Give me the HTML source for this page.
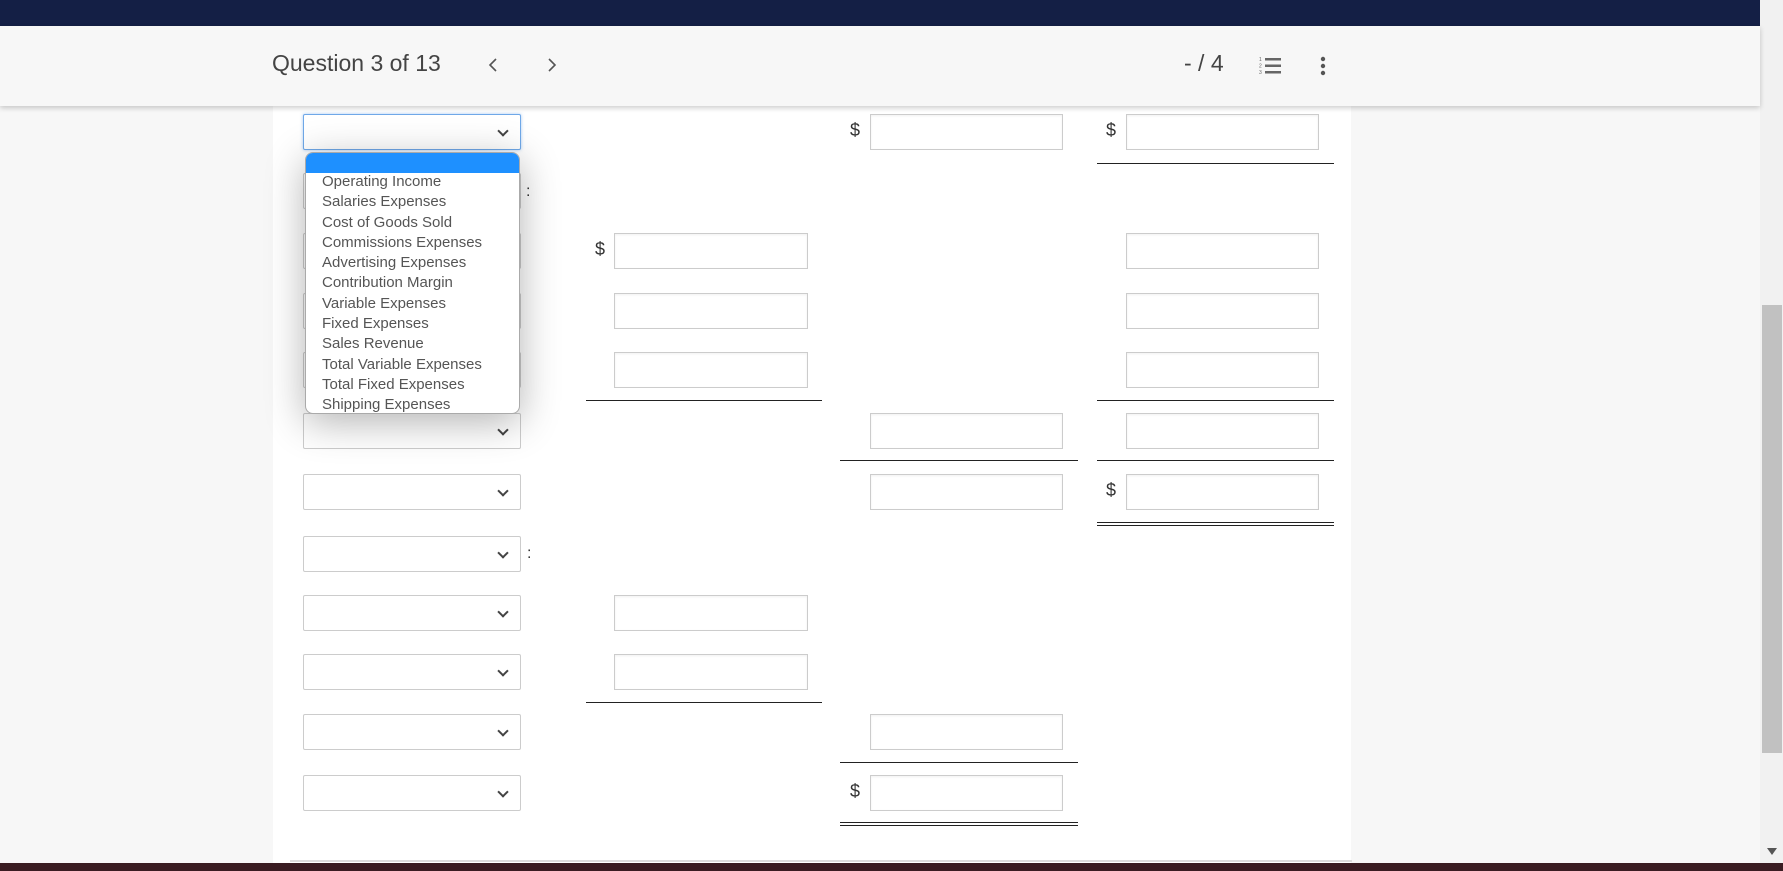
<!DOCTYPE html>
<html><head><meta charset="utf-8"><style>
*{margin:0;padding:0;box-sizing:border-box}
body{width:1783px;height:871px;position:relative;overflow:hidden;background:#f7f7f7;font-family:"Liberation Sans",sans-serif;color:#333}
.a{position:absolute}
.top{left:0;top:0;width:1760px;height:26px;background:#141f45}
.hdr{left:0;top:26px;width:1760px;height:80px;background:#f7f7f7;box-shadow:0 2px 5px rgba(0,0,0,.2);z-index:3}
.panel{left:273px;top:106px;width:1078px;height:760px;background:#fff}
.sel{position:absolute;left:303px;width:218px;height:36px;border:1px solid #ccc;border-radius:2px;background:#fff}
.sel:after{content:"";position:absolute;right:13px;top:12px;width:6px;height:6px;border-right:2px solid #444;border-bottom:2px solid #444;transform:rotate(45deg)}
.in{position:absolute;height:36px;border:1px solid #ccc;background:#fff;box-shadow:inset 0 1px 2px rgba(0,0,0,.06)}
.c2{left:614px;width:194px}.c3{left:870px;width:193px}.c4{left:1126px;width:193px}
.ln{position:absolute;height:0;border-top:1.5px solid #222}
.dbl{position:absolute;height:4px;border-top:1.5px solid #222;border-bottom:1.5px solid #222}
.d{position:absolute;font-size:18px;color:#333}
.colon{position:absolute;font-size:16px}
.dd{left:305px;top:152px;width:215px;height:262px;background:#fff;border:1px solid #aaa;border-radius:8px;overflow:hidden;box-shadow:0 8px 40px rgba(0,0,0,.3);z-index:5}
.dd .hl{height:20px;background:#1e90ff}
.dd div.i{padding-left:16px;font-size:15px;line-height:20.3px;color:#555;white-space:nowrap}
.sb{left:1760px;top:0;width:23px;height:863px;background:#f1f1f1}
.th{left:1762px;top:305px;width:20px;height:448px;background:#c1c1c1}
.bot{left:0;top:863px;width:1783px;height:8px;background:#3a1c22}
</style></head><body>
<div class="a top"></div>
<div class="a hdr">
<div class="a" style="left:272px;top:24px;font-size:23px;color:#444">Question 3 of 13</div>
<svg class="a" style="left:488px;top:31px" width="10" height="16"><path d="M8 2 L2 8 L8 14" fill="none" stroke="#555" stroke-width="1.6"/></svg>
<svg class="a" style="left:547px;top:31px" width="10" height="16"><path d="M2 2 L8 8 L2 14" fill="none" stroke="#555" stroke-width="1.6"/></svg>
<div class="a" style="left:1184px;top:24px;font-size:23px;color:#444">- / 4</div>
<svg class="a" style="left:1259px;top:30px" width="24" height="20" viewBox="0 0 24 20"><g fill="#666"><rect x="6" y="2" width="16" height="2.5"/><rect x="6" y="8.5" width="16" height="2.5"/><rect x="6" y="15" width="16" height="2.5"/><text x="0" y="5" font-size="5" font-family="Liberation Sans">1</text><text x="0" y="11.5" font-size="5" font-family="Liberation Sans">2</text><text x="0" y="18" font-size="5" font-family="Liberation Sans">3</text></g></svg>
<svg class="a" style="left:1320px;top:30px" width="6" height="20"><g fill="#555"><circle cx="3" cy="3" r="2.2"/><circle cx="3" cy="10" r="2.2"/><circle cx="3" cy="17" r="2.2"/></g></svg>
</div>
<div class="a panel"></div>
<div class="a" style="left:290px;top:860px;width:1062px;height:2px;background:#ddd"></div>

<div class="sel" style="top:114px;border-color:#6fa8e8;box-shadow:0 0 3px rgba(80,150,230,.5)"></div>
<div class="sel" style="top:173px"></div><div class="colon" style="left:526px;top:183px">:</div>
<div class="sel" style="top:233px"></div>
<div class="sel" style="top:293px"></div>
<div class="sel" style="top:352px"></div>
<div class="sel" style="top:413px"></div>
<div class="sel" style="top:474px"></div>
<div class="sel" style="top:536px"></div><div class="colon" style="left:527px;top:545px">:</div>
<div class="sel" style="top:595px"></div>
<div class="sel" style="top:654px"></div>
<div class="sel" style="top:714px"></div>
<div class="sel" style="top:775px"></div>

<div class="d" style="left:595px;top:239px">$</div>
<div class="in c2" style="top:233px"></div>
<div class="in c2" style="top:293px"></div>
<div class="in c2" style="top:352px"></div>
<div class="ln" style="left:586px;width:236px;top:400px"></div>
<div class="in c2" style="top:595px"></div>
<div class="in c2" style="top:654px"></div>
<div class="ln" style="left:586px;width:236px;top:702px"></div>

<div class="d" style="left:850px;top:120px">$</div>
<div class="in c3" style="top:114px"></div>
<div class="in c3" style="top:413px"></div>
<div class="ln" style="left:840px;width:238px;top:460px"></div>
<div class="in c3" style="top:474px"></div>
<div class="in c3" style="top:714px"></div>
<div class="ln" style="left:840px;width:238px;top:762px"></div>
<div class="d" style="left:850px;top:781px">$</div>
<div class="in c3" style="top:775px"></div>
<div class="dbl" style="left:840px;width:238px;top:822px"></div>

<div class="d" style="left:1106px;top:120px">$</div>
<div class="in c4" style="top:114px"></div>
<div class="ln" style="left:1097px;width:237px;top:163px"></div>
<div class="in c4" style="top:233px"></div>
<div class="in c4" style="top:293px"></div>
<div class="in c4" style="top:352px"></div>
<div class="ln" style="left:1097px;width:237px;top:400px"></div>
<div class="in c4" style="top:413px"></div>
<div class="ln" style="left:1097px;width:237px;top:460px"></div>
<div class="d" style="left:1106px;top:480px">$</div>
<div class="in c4" style="top:474px"></div>
<div class="dbl" style="left:1097px;width:237px;top:522px"></div>

<div class="a dd"><div class="hl"></div>
<div class="i" style="margin-top:-1px">Operating Income</div><div class="i">Salaries Expenses</div><div class="i">Cost of Goods Sold</div><div class="i">Commissions Expenses</div><div class="i">Advertising Expenses</div><div class="i">Contribution Margin</div><div class="i">Variable Expenses</div><div class="i">Fixed Expenses</div><div class="i">Sales Revenue</div><div class="i">Total Variable Expenses</div><div class="i">Total Fixed Expenses</div><div class="i">Shipping Expenses</div>
</div>

<div class="a sb"></div><div class="a th"></div>
<div class="a" style="left:1767px;top:848px;width:0;height:0;border-left:5px solid transparent;border-right:5px solid transparent;border-top:7px solid #555"></div>
<div class="a bot"></div>
</body></html>
